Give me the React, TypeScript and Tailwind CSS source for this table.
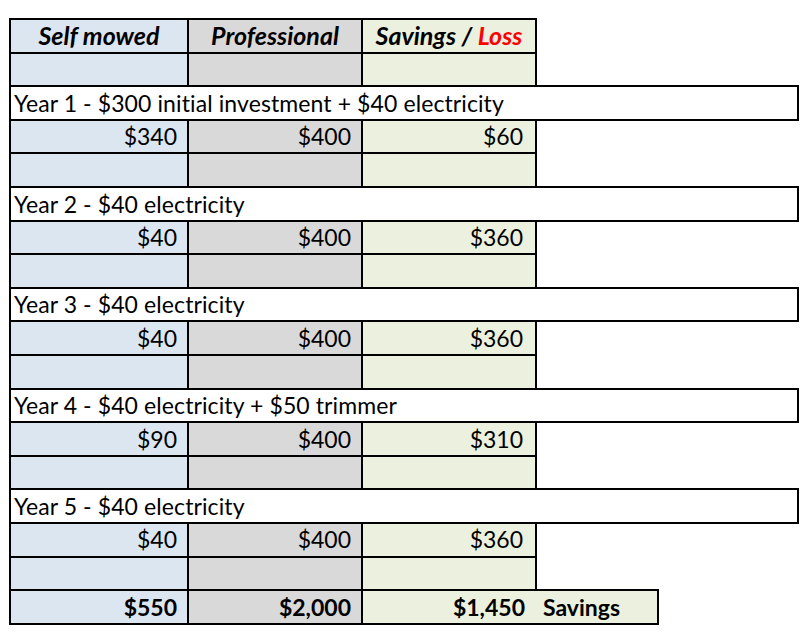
const font = { fontFamily: "Lato, 'Open Sans', sans-serif" };

const years = [
  { label: "Year 1 - $300 initial investment + $40 electricity", self: "$340", pro: "$400", save: "$60" },
  { label: "Year 2 - $40 electricity", self: "$40", pro: "$400", save: "$360" },
  { label: "Year 3 - $40 electricity", self: "$40", pro: "$400", save: "$360" },
  { label: "Year 4 - $40 electricity + $50 trimmer", self: "$90", pro: "$400", save: "$310" },
  { label: "Year 5 - $40 electricity", self: "$40", pro: "$400", save: "$360" },
];

const Blank = () => (
  <div className="flex h-[35.6px] -mt-[2px]">
    <div className="w-[180px] border-2 border-black bg-[#dce6f1]" />
    <div className="w-[176px] -ml-[2px] border-2 border-black bg-[#d9d9d9]" />
    <div className="w-[176px] -ml-[2px] border-2 border-black bg-[#ebf1de]" />
  </div>
);

const Values = ({ a, b, c }: { a: string; b: string; c: string }) => (
  <div className="flex h-[35.6px] -mt-[2px] text-[23px]">
    <div className="w-[180px] border-2 border-black bg-[#dce6f1] flex items-center justify-end pr-[10px]">{a}</div>
    <div className="w-[176px] -ml-[2px] border-2 border-black bg-[#d9d9d9] flex items-center justify-end pr-[10px]">{b}</div>
    <div className="w-[176px] -ml-[2px] border-2 border-black bg-[#ebf1de] flex items-center justify-end pr-[12px]">{c}</div>
  </div>
);

export default function App() {
  return (
    <div className="w-[809px] h-[643px] bg-white text-black pt-[18px] pl-[9px]" style={font}>
      <div className="flex h-[35.6px] text-[25px] font-bold italic">
        <div className="w-[180px] border-2 border-black bg-[#dce6f1] flex items-center justify-center">Self mowed</div>
        <div className="w-[176px] -ml-[2px] border-2 border-black bg-[#d9d9d9] flex items-center justify-center">Professional</div>
        <div className="w-[176px] -ml-[2px] border-2 border-black bg-[#ebf1de] flex items-center justify-center">
          Savings /&nbsp;<span className="text-[#ff0000]">Loss</span>
        </div>
      </div>
      <Blank />
      {years.map((y) => (
        <div key={y.label}>
          <div className="flex h-[35.6px] -mt-[2px]">
            <div className="w-[790px] border-2 border-black bg-white flex items-center pl-[3px] text-[23px] tracking-[0.1px]">{y.label}</div>
          </div>
          <Values a={y.self} b={y.pro} c={y.save} />
          <Blank />
        </div>
      ))}
      <div className="flex h-[35.6px] -mt-[2px] text-[23px] font-bold">
        <div className="w-[180px] border-2 border-black bg-[#dce6f1] flex items-center justify-end pr-[10px]">$550</div>
        <div className="w-[176px] -ml-[2px] border-2 border-black bg-[#d9d9d9] flex items-center justify-end pr-[10px]">$2,000</div>
        <div className="w-[298px] -ml-[2px] border-2 border-black bg-[#ebf1de] flex items-center">
          <span className="w-[162px] text-right">$1,450</span>
          <span className="ml-[18px]">Savings</span>
        </div>
      </div>
    </div>
  );
}
